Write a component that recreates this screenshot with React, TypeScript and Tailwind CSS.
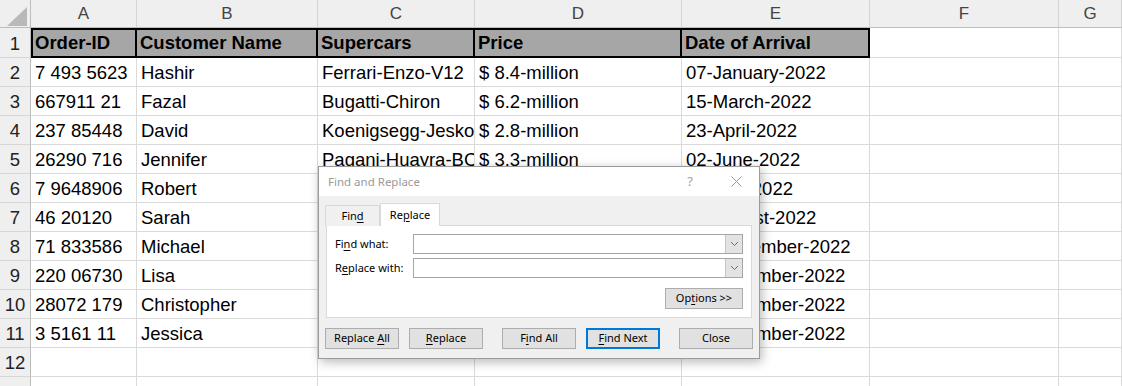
import type { ReactNode } from "react";

const colLetters = ["A", "B", "C", "D", "E", "F", "G"];

const header = ["Order-ID", "Customer Name", "Supercars", "Price", "Date of Arrival"];

const data: string[][] = [
  ["7 493 5623", "Hashir", "Ferrari-Enzo-V12", "$ 8.4-million", "07-January-2022"],
  ["667911 21", "Fazal", "Bugatti-Chiron", "$ 6.2-million", "15-March-2022"],
  ["237 85448", "David", "Koenigsegg-Jesko", "$ 2.8-million", "23-April-2022"],
  ["26290 716", "Jennifer", "Pagani-Huayra-BC", "$ 3.3-million", "02-June-2022"],
  ["7 9648906", "Robert", "Lamborghini-Sian", "$ 3.6-million", "09-July-2022"],
  ["46 20120", "Sarah", "McLaren-Elva", "$ 1.7-million", "11-August-2022"],
  ["71 833586", "Michael", "Rimac-Nevera", "$ 2.4-million", "05-September-2022"],
  ["220 06730", "Lisa", "Aston-Valkyrie", "$ 3.2-million", "12-November-2022"],
  ["28072 179", "Christopher", "Porsche-918", "$ 1.8-million", "20-November-2022"],
  ["3 5161 11", "Jessica", "Bugatti-Divo", "$ 5.8-million", "28-December-2022"],
];

const Cell = ({ children, className = "" }: { children?: ReactNode; className?: string }) => (
  <div className={`flex items-end overflow-hidden whitespace-nowrap pb-[2px] leading-[22px] ${className}`}>
    {children}
  </div>
);

const RowHead = ({ n }: { n: number | string }) => (
  <div className="flex items-end justify-center pb-[2px] leading-[22px] bg-[#efefef] border-r border-b border-r-[#bdbdbd] border-b-[#d6d6d6] text-[#222]">
    {n}
  </div>
);

const BtnLabel = ({ pre, u, post }: { pre?: string; u?: string; post?: string }) => (
  <span>
    {pre}
    {u && <u className="underline-offset-[2px]">{u}</u>}
    {post}
  </span>
);

const DialogButton = ({ children, primary = false, className = "" }: { children: ReactNode; primary?: boolean; className?: string }) => (
  <button
    className={`h-[21px] w-[74px] flex items-center justify-center bg-[#e1e1e1] text-black ${
      primary ? "border-2 border-[#0078d7]" : "border border-[#adadad]"
    } ${className}`}
  >
    {children}
  </button>
);

const Chevron = () => (
  <svg width="9" height="6" viewBox="0 0 9 6" fill="none">
    <path d="M1 1l3.5 3.5L8 1" stroke="#6e6e6e" strokeWidth="1" />
  </svg>
);

const ComboInput = () => (
  <div className="flex h-[20px] w-[332px] border border-[#a6a6a6] bg-white">
    <div className="flex-1" />
    <div className="flex w-[17px] items-center justify-center bg-[#e3e3e3] border-l border-[#c4c4c4]">
      <Chevron />
    </div>
  </div>
);

const FindReplaceDialog = () => (
  <div className="absolute left-[318px] top-[166px] flex h-[193px] w-[442px] flex-col border border-[#9b9b9b] bg-[#f0f0f0] font-['Noto_Sans',sans-serif] text-[11px] text-black shadow-[2px_3px_10px_rgba(0,0,0,0.28)]">
    {/* title bar */}
    <div className="flex h-[29px] shrink-0 items-center bg-white pl-[9px] text-[11.5px] text-[#9a9a9a]">
      <span className="flex-1">Find and Replace</span>
      <span className="mr-[38px] text-[13px] text-[#a0a0a0]">?</span>
      <svg className="mr-[17px]" width="11" height="11" viewBox="0 0 11 11">
        <path d="M0.5 0.5L10.5 10.5M10.5 0.5L0.5 10.5" stroke="#9a9a9a" strokeWidth="1" />
      </svg>
    </div>

    {/* tabs */}
    <div className="mt-[6px] flex items-end pl-[6px]">
      <div className="relative top-[1px] flex h-[21px] w-[55px] items-center justify-center border border-b-0 border-[#d9d9d9] bg-[#f0f0f0] pt-[1px]">
        <BtnLabel pre="Fin" u="d" />
      </div>
      <div className="relative z-10 top-[1px] flex h-[23px] w-[60px] items-center justify-center border border-b-0 border-[#d9d9d9] bg-white">
        <BtnLabel pre="Re" u="p" post="lace" />
      </div>
    </div>

    {/* panel */}
    <div className="mx-[7px] flex h-[93px] flex-col border border-[#d9d9d9] bg-white px-[8px] pt-[8px]">
      <div className="flex items-center">
        <span className="w-[78px]">
          <BtnLabel pre="Fi" u="n" post="d what:" />
        </span>
        <ComboInput />
      </div>
      <div className="mt-[4px] flex items-center">
        <span className="w-[78px]">
          <BtnLabel pre="R" u="e" post="place with:" />
        </span>
        <ComboInput />
      </div>
      <div className="mt-[10px] flex justify-end">
        <button className="flex h-[21px] w-[78px] items-center justify-center border border-[#adadad] bg-[#e1e1e1]">
          <BtnLabel pre="Op" u="t" post="ions >>" />
        </button>
      </div>
    </div>

    {/* bottom buttons */}
    <div className="mt-[10px] flex pl-[6px]">
      <DialogButton>
        <BtnLabel pre="Replace " u="A" post="ll" />
      </DialogButton>
      <DialogButton className="ml-[10px]">
        <BtnLabel u="R" post="eplace" />
      </DialogButton>
      <DialogButton className="ml-[19px]">
        <BtnLabel pre="F" u="i" post="nd All" />
      </DialogButton>
      <DialogButton primary className="ml-[10px]">
        <BtnLabel u="F" post="ind Next" />
      </DialogButton>
      <DialogButton className="ml-[19px]">Close</DialogButton>
    </div>
  </div>
);

export default function App() {
  const grid = "border-r border-b border-[#dadada]";
  return (
    <div className="relative h-[386px] w-[1122px] overflow-hidden bg-white font-['Liberation_Sans',Arial,sans-serif] text-[18.5px] text-black">
      <div className="grid grid-cols-[31px_106px_181px_157px_207px_188px_189px_1fr] grid-rows-[28px_30px_repeat(12,29px)]">
        {/* column headers */}
        <div className="relative bg-[#efefef] border-r border-b border-r-[#bdbdbd] border-b-[#bdbdbd]">
          <svg className="absolute left-[7px] top-[7px]" width="20" height="19" viewBox="0 0 20 19">
            <path d="M20 0V19H0Z" fill="#b9b9b9" />
          </svg>
        </div>
        {colLetters.map((l) => (
          <div
            key={l}
            className="flex items-center justify-center bg-[#efefef] border-r border-b border-r-[#d4d4d4] border-b-[#bdbdbd] text-[17px] text-[#444]"
          >
            {l}
          </div>
        ))}

        {/* row 1: table header */}
        <RowHead n={1} />
        {header.map((h, i) => (
          <Cell
            key={h}
            className={`bg-[#a6a6a6] font-bold border-t-2 border-b-2 border-r-2 border-black pb-[1px] ${
              i === 0 ? "border-l-2 pl-[2px]" : "pl-[3px]"
            }`}
          >
            {h}
          </Cell>
        ))}
        <Cell className={grid} />
        <Cell className={grid} />

        {/* data rows */}
        {data.map((r, ri) => (
          <div key={ri} className="contents">
            <RowHead n={ri + 2} />
            {r.map((v, ci) => (
              <Cell key={ci} className={`${grid} pl-[4px]`}>
                {v}
              </Cell>
            ))}
            <Cell className={grid} />
            <Cell className={grid} />
          </div>
        ))}

        {/* empty rows */}
        {[12, ""].map((n, ri) => (
          <div key={ri} className="contents">
            <RowHead n={n} />
            {colLetters.map((l) => (
              <Cell key={l} className={grid} />
            ))}
          </div>
        ))}
      </div>

      <FindReplaceDialog />
    </div>
  );
}
